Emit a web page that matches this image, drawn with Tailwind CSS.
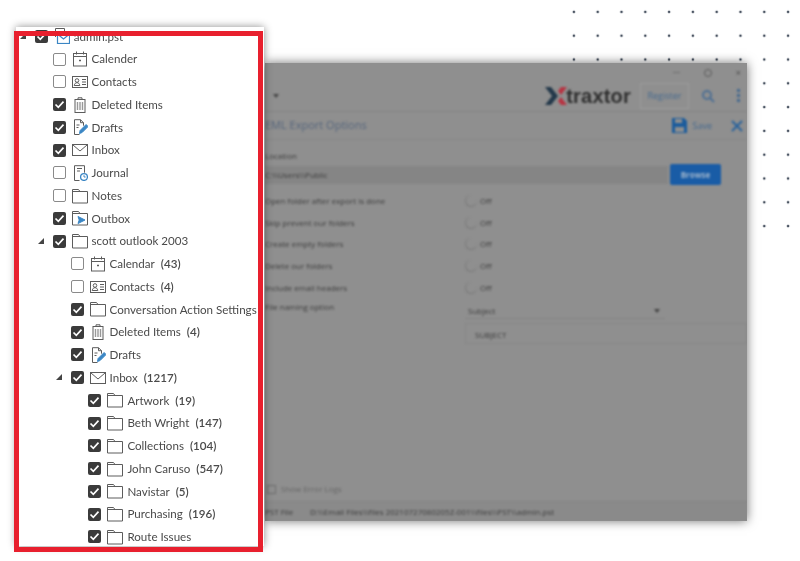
<!DOCTYPE html>
<html lang="en">
  <head>
    <meta charset="UTF-8">
    <title>Xtraxtor EML Export Options</title>
    <script src="https://cdn.jsdelivr.net/npm/@tailwindcss/browser@4"></script>
  </head>
  <body class="bg-white font-['Open_Sans',sans-serif]">
    <svg class="hidden">
      <symbol id="i-calendar" viewBox="0 0 16 16" fill="none" stroke="#5c5c5c" stroke-width="1">
        <rect x="1.5" y="2.5" width="13" height="12.5"/><path d="M1.5 5.5h13M4.5 .5v3M11.5 .5v3"/><path d="M7 9.5h2" stroke-width="1.6"/>
      </symbol>
      <symbol id="i-contacts" viewBox="0 0 16 16" fill="none" stroke="#5c5c5c" stroke-width="1">
        <rect x=".5" y="2.5" width="15" height="11"/><circle cx="5" cy="6.5" r="1.8"/><path d="M2.2 11.5c.4-2 1.4-2.8 2.8-2.8s2.4.8 2.8 2.8zM10 5.5h4M10 8h4M10 10.5h4"/>
      </symbol>
      <symbol id="i-trash" viewBox="0 0 16 16" fill="none" stroke="#5c5c5c" stroke-width="1">
        <rect x="3" y="2.5" width="10" height="13"/><path d="M6 2.5V.8h4v1.7"/><path d="M5.5 5v8M8 5v8M10.5 5v8" stroke="#999" stroke-width="1.4"/>
      </symbol>
      <symbol id="i-drafts" viewBox="0 0 16 16" fill="none" stroke="#5c5c5c" stroke-width="1">
        <path d="M2.5 15.5V.7h6l3 3v3M2.5 15.5h5M8.5 .7v3h3"/><path d="M4.5 6h3M4.5 8.5h2"/><path d="M7.5 14.5l.6-3 6-6 2 2-6 6z" fill="#3b86c4" stroke="#3b86c4"/>
      </symbol>
      <symbol id="i-mail" viewBox="0 0 16 16" fill="none" stroke="#5c5c5c" stroke-width="1">
        <rect x=".5" y="2.5" width="15" height="11"/><path d="M1 3l7 6 7-6"/>
      </symbol>
      <symbol id="i-journal" viewBox="0 0 16 16" fill="none" stroke="#5c5c5c" stroke-width="1">
        <path d="M2.5 15.5V.7h10v7M2.5 15.5h5"/><path d="M5 3.5h5M5 6h3"/><circle cx="12" cy="12" r="3.4" fill="#fff" stroke="#3b86c4" stroke-width="1.3"/><path d="M12 10.2V12h1.6" stroke="#3b86c4"/>
      </symbol>
      <symbol id="i-folder" viewBox="0 0 16 16" fill="none" stroke="#5c5c5c" stroke-width="1">
        <path d="M.5 15V1.5h6l1.5 2h7.5V15zM.5 3.5h7.5"/>
      </symbol>
      <symbol id="i-outbox" viewBox="0 0 16 16" fill="none" stroke="#5c5c5c" stroke-width="1">
        <path d="M.5 15V1.5h6l1.5 2h7.5V15zM.5 3.5h7.5"/><path d="M6 6.5l7 3.5-7 3.5 1.2-3.5z" fill="#3b86c4" stroke="#3b86c4"/>
      </symbol>
      <symbol id="i-pst" viewBox="0 0 16 16" fill="none" stroke="#5c5c5c" stroke-width="1">
        <path d="M1.5 9V.5h9v4"/><rect x="3.5" y="6" width="12" height="9.5" fill="#fff" stroke="#3b86c4" stroke-width="1.2"/><path d="M4 6.5l5.5 4.5 5.5-4.5" stroke="#3b86c4" stroke-width="1.2"/>
      </symbol>
    </svg>

    <div class="relative w-[800px] h-[561px] overflow-hidden bg-white">
      <!-- dot pattern behind the app window -->
      <div class="absolute left-[562px] top-0 w-[238px] h-[238px] bg-[radial-gradient(circle,#4b5563_1px,transparent_1.7px)] bg-[size:23.8px_23.8px]"></div>

      <!-- blurred app window -->
      <div class="absolute left-[265px] top-[63px] w-[482px] h-[458px] overflow-hidden bg-[#8f8f8f] shadow-[0_0_10px_rgba(0,0,0,0.55)]">
        <div class="flex flex-col h-full blur-[1.3px] text-[8px] text-[#3c3c3c]">
          <div class="flex justify-end items-center gap-[24px] h-[17px] pr-[6px] pt-[2px] text-[#5a5a5a]">
            <span class="w-[7px] h-px bg-[#6f6f6f]"></span>
            <span class="w-[8px] h-[8px] border border-[#5a5a5a] rounded-full"></span>
            <span class="text-[9px] leading-none font-bold">×</span>
          </div>
          <div class="flex items-center h-[32px] border-b border-[#858585]">
            <span class="ml-[8px] w-0 h-0 border-x-[3px] border-x-transparent border-t-[4px] border-t-[#444]"></span>
            <div class="ml-auto flex items-center">
              <svg class="w-[24px] h-[22px]" viewBox="0 0 24 20"><path d="M1 1h6l7 9-7 9H1l7-9z" fill="#23384a"/><path d="M23 1h-6l-3 4 3 4zM23 19h-6l-3-4 3-4z" fill="#b73442"/></svg>
              <span class="-ml-[2px] text-[20px] leading-none font-bold tracking-[0.2px] text-[#2f2f2f] font-['Liberation_Sans',sans-serif]">traxtor</span>
              <span class="ml-[9px] flex items-center justify-center w-[49px] h-[26px] border border-[#9c9c9c] text-[9px] text-[#44698f]">Register</span>
              <svg class="ml-[12px] w-[14px] h-[14px]" viewBox="0 0 14 14" fill="none" stroke="#4d6f93" stroke-width="2"><circle cx="6" cy="6" r="4"/><path d="M9 9l4 4"/></svg>
              <span class="ml-[22px] mr-[7px] flex flex-col gap-[2px]">
                <span class="w-[3px] h-[3px] bg-[#44698f]"></span><span class="w-[3px] h-[3px] bg-[#44698f]"></span><span class="w-[3px] h-[3px] bg-[#44698f]"></span>
              </span>
            </div>
          </div>
          <div class="flex items-center h-[28px] border-b border-[#888]">
            <span class="text-[11px] text-[#55657c]">EML Export Options</span>
            <div class="ml-auto flex items-center">
              <svg class="w-[15px] h-[15px]" viewBox="0 0 15 15"><path d="M0 0h12l3 3v12H0z" fill="#1c5c9c"/><rect x="3" y="1" width="7" height="4" fill="#8f8f8f"/><rect x="3" y="9" width="9" height="5" fill="#8f8f8f"/></svg>
              <span class="ml-[6px] text-[9px] text-[#44698f]">Save</span>
              <svg class="ml-[19px] mr-[4px] w-[12px] h-[12px]" viewBox="0 0 12 12" stroke="#2a639c" stroke-width="2"><path d="M1 1l10 10M11 1L1 11"/></svg>
            </div>
          </div>
          <div class="mt-[10px] h-[12px] leading-[12px]">Location</div>
          <div class="mt-[2px] flex items-center pr-[26px]">
            <div class="flex-1 h-[18px] leading-[18px] bg-[#858585]">C:\\Users\\Public</div>
            <div class="ml-[2px] flex items-center justify-center w-[51px] h-[21px] rounded-[2px] bg-[#195ca6] text-[#9fb5cc] font-bold">Browse</div>
          </div>
          <div class="mt-[5px] flex flex-col">
            <div class="flex items-center h-[21.8px]"><span class="w-[200px]">Open folder after export is done</span><span class="w-[12px] h-[12px] rounded-full border-l border-b border-[#7a7a7a]"></span><span class="ml-[3px]">Off</span></div>
            <div class="flex items-center h-[21.8px]"><span class="w-[200px]">Skip prevent our folders</span><span class="w-[12px] h-[12px] rounded-full border-l border-b border-[#7a7a7a]"></span><span class="ml-[3px]">Off</span></div>
            <div class="flex items-center h-[21.8px]"><span class="w-[200px]">Create empty folders</span><span class="w-[12px] h-[12px] rounded-full border-l border-b border-[#7a7a7a]"></span><span class="ml-[3px]">Off</span></div>
            <div class="flex items-center h-[21.8px]"><span class="w-[200px]">Delete our folders</span><span class="w-[12px] h-[12px] rounded-full border-l border-b border-[#7a7a7a]"></span><span class="ml-[3px]">Off</span></div>
            <div class="flex items-center h-[21.8px]"><span class="w-[200px]">Include email headers</span><span class="w-[12px] h-[12px] rounded-full border-l border-b border-[#7a7a7a]"></span><span class="ml-[3px]">Off</span></div>
          </div>
          <div class="mt-[2px] flex items-start">
            <span class="w-[200px]">File naming option</span>
            <div class="flex items-center w-[200px] h-[15px] mt-[3px] pl-[3px] pr-[5px] border-b border-[#848484]">Subject<span class="ml-auto w-0 h-0 border-x-[3px] border-x-transparent border-t-[4px] border-t-[#444]"></span></div>
          </div>
          <div class="ml-[200px] mt-[4px] h-[21px] leading-[21px] pl-[9px] border border-[#878787]">SUBJECT</div>
          <div class="mt-auto flex items-center h-[14px] pl-[2px] text-[#666]"><span class="w-[9px] h-[9px] mr-[5px] border border-[#6d6d6d]"></span>Show Error Logs</div>
          <div class="mt-[5px] flex items-center h-[20px] border-t border-[#838383] bg-[#8a8a8a]"><span class="w-[45px]">PST File</span><span>D:\\Email Files\\files 20210727080205Z-001\\files\\PST\\admin.pst</span></div>
        </div>
      </div>

      <!-- tree panel with red highlight -->
      <div class="absolute left-[16px] top-[27px] w-[248px] h-[519px] overflow-hidden bg-white shadow-[0_0_8px_rgba(0,0,0,0.45)]">
        <div id="tree" class="-mt-[2.1px] text-[11.6px] text-[#4a4a4a] font-['Lato',sans-serif] blur-[0.3px]"></div>
      </div>
      <div class="absolute left-[14px] top-[31px] w-[249px] h-[521px] border-[5px] border-[#e8202e]"></div>
    </div>

    <script>
      // [level, icon, label, count, checked, expandable]
      const rows = [
        [0, "pst", "admin.pst", "", true, true],
        [1, "calendar", "Calender", "", false],
        [1, "contacts", "Contacts", "", false],
        [1, "trash", "Deleted Items", "", true],
        [1, "drafts", "Drafts", "", true],
        [1, "mail", "Inbox", "", true],
        [1, "journal", "Journal", "", false],
        [1, "folder", "Notes", "", false],
        [1, "outbox", "Outbox", "", true],
        [1, "folder", "scott outlook 2003", "", true, true],
        [2, "calendar", "Calendar", "(43)", false],
        [2, "contacts", "Contacts", "(4)", false],
        [2, "folder", "Conversation Action Settings", "", true],
        [2, "trash", "Deleted Items", "(4)", true],
        [2, "drafts", "Drafts", "", true],
        [2, "mail", "Inbox", "(1217)", true, true],
        [3, "folder", "Artwork", "(19)", true],
        [3, "folder", "Beth Wright", "(147)", true],
        [3, "folder", "Collections", "(104)", true],
        [3, "folder", "John Caruso", "(547)", true],
        [3, "folder", "Navistar", "(5)", true],
        [3, "folder", "Purchasing", "(196)", true],
        [3, "folder", "Route Issues", "", true],
      ];

      const box = (checked) => checked
        ? '<span class="flex items-center justify-center shrink-0 w-[13px] h-[13px] rounded-[2px] bg-[#3b3b3b]"><svg class="w-[11px] h-[11px]" viewBox="0 0 11 11" fill="none" stroke="#fff" stroke-width="1.7"><path d="M1.5 5.5l2.8 2.8 5.2-5.6"/></svg></span>'
        : '<span class="shrink-0 w-[13px] h-[13px] rounded-[2px] border border-[#8a8a8a] bg-white"></span>';

      document.getElementById("tree").innerHTML = rows.map(([level, icon, label, count, checked, open]) => `
        <div class="relative flex items-center h-[22.75px] whitespace-nowrap" style="padding-left:${18.7 + level * 17.9}px">
          ${open ? `<svg class="absolute top-[8px] w-[6px] h-[6px]" style="left:${3.5 + level * 18.2}px" viewBox="0 0 6 6"><path d="M6 0v6H0z" fill="#444"/></svg>` : ""}
          ${box(checked)}
          <svg class="shrink-0 ml-[6px] w-[16px] h-[16px]"><use href="#i-${icon}"/></svg>
          <span class="ml-[4px]">${label}</span>
          ${count ? `<span class="ml-[6px] font-semibold">${count}</span>` : ""}
        </div>`).join("");
    </script>
  </body>
</html>
